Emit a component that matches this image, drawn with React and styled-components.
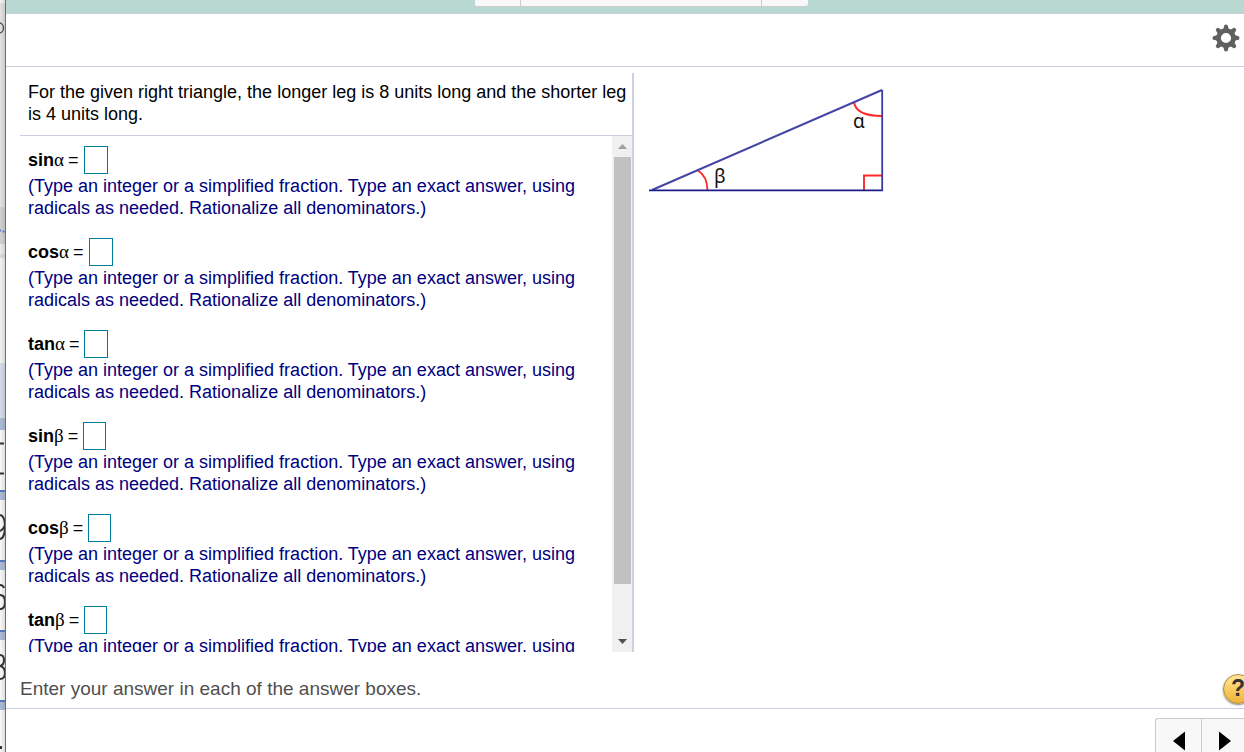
import React from 'react';
import styled, { createGlobalStyle } from 'styled-components';

const GlobalStyle = createGlobalStyle`
	* {
		box-sizing: border-box;
	}

	body {
		margin: 0;
		background: #fff;
		color: #000;
		font-family: 'Liberation Sans', Arial, sans-serif;
		font-size: 18px;
		line-height: 22px;
	}

	button {
		margin: 0;
		padding: 0;
		border: 0;
		background: none;
	}
`;

const Page = styled.div`
	display: flex;
	height: 100vh;
	overflow: hidden;
`;

const Backdrop = styled.div`
	flex: none;
	display: flex;
	flex-direction: column;
	width: 6px;
	overflow: hidden;
	border-right: 1px solid #6e6e6e;
`;

const Cell = styled.div`
	flex: none;
	display: flex;
	align-items: ${({ $align }) => $align || 'center'};
	height: ${({ $height }) => $height}px;
	overflow: hidden;
	background: linear-gradient(to right, transparent, rgba(0, 0, 0, 0.1)), ${({ $color }) => $color};
	border-top: ${({ $line }) => ($line ? `2px solid ${$line}` : '0')};
`;

const Dialog = styled.main`
	flex: 1;
	min-width: 0;
	display: flex;
	flex-direction: column;
	overflow: hidden;
`;

const TopBar = styled.div`
	flex: none;
	display: flex;
	justify-content: center;
	align-items: flex-start;
	height: 14px;
	background: #b9d8d1;
	border-bottom: 1px solid #c9cede;
`;

const TabStrip = styled.div`
	display: grid;
	grid-template-columns: 46px 241px 46px;
	height: 7px;
	margin-right: -32px;
	background: #f8f8f8;
	border-bottom: 1px solid #ccc;
	border-radius: 0 0 3px 3px;
`;

const Tab = styled.div`
	border-right: ${({ $last }) => ($last ? '0' : '1px solid #ccc')};
`;

const Header = styled.header`
	flex: none;
	display: flex;
	align-items: center;
	justify-content: flex-end;
	height: 53px;
	padding: 0 4px 4px;
	border-bottom: 1px solid #c9cede;
`;

const GearButton = styled.button`
	width: 28px;
	height: 28px;

	svg {
		display: block;
	}
`;

const Content = styled.div`
	flex: 1;
	min-height: 0;
	display: flex;
	padding: 6px 0 0 14px;
`;

const QuestionPane = styled.section`
	flex: 0 1 614px;
	display: flex;
	flex-direction: column;
	border-right: 2px solid #ccd0e0;
`;

const Prompt = styled.p`
	margin: 0;
	padding: 8px 2px 10px 8px;
	border-bottom: 1px solid #c9cede;
`;

const ScrollArea = styled.div`
	flex: 1;
	min-height: 0;
	display: flex;
`;

const QuestionList = styled.div`
	flex: 1;
	min-width: 0;
	display: flex;
	flex-direction: column;
	gap: 19px;
	padding: 10px 8px 0;
	overflow: hidden;
`;

const Question = styled.div`
	flex: none;
`;

const AnswerLabel = styled.label`
	display: flex;
	align-items: center;
	height: 29px;
	padding-bottom: 1px;
`;

const Fn = styled.b`
	font-weight: 700;
`;

const Greek = styled.span`
	font-family: 'Liberation Serif', 'Times New Roman', serif;
	font-size: 19px;
`;

const Equals = styled.span`
	margin: 0 5px 0 4px;
`;

const AnswerInput = styled.input`
	width: ${({ $narrow }) => ($narrow ? 23 : 24)}px;
	height: 28px;
	padding: 0 3px;
	border: 1px solid #007c9c;
	border-radius: 0;
	outline: none;
	background: #fff;
	font: inherit;
`;

const Hint = styled.p`
	margin: 0;
	color: #000080;
`;

const Scrollbar = styled.div`
	flex: none;
	display: flex;
	flex-direction: column;
	align-items: center;
	width: 20px;
	background: #f0f0f0;
`;

const ScrollArrow = styled.button`
	flex: none;
	width: 20px;
	height: 21px;

	svg {
		display: block;
		margin: 0 auto;
	}
`;

const Track = styled.div`
	flex: 1;
	width: 100%;
	padding: 0 1px 0 2px;
`;

const Thumb = styled.div`
	height: 90%;
	background: #c1c1c1;
`;

const FigurePane = styled.section`
	flex: 1;
	padding: 12px 14px;
`;

const HelpRow = styled.div`
	flex: none;
	display: flex;
	align-items: center;
	justify-content: space-between;
	height: 57px;
	padding: 17px 0 0 14px;
	border-bottom: 1px solid #c9cede;
	color: #505050;
	font-size: 19px;
`;

const HelpButton = styled.button`
	flex: none;
	width: 30px;
	height: 30px;
	margin-right: -9px;
	border: 1px solid #b0893a;
	border-radius: 50%;
	background: linear-gradient(#ffe79a, #f9cd62 50%, #f0b23c);
	box-shadow: 0 1px 2px rgba(0, 0, 0, 0.5);
	color: #333;
	font: bold 23px 'Liberation Sans', Arial, sans-serif;
`;

const Footer = styled.footer`
	flex: none;
	display: flex;
	justify-content: flex-end;
	height: 43px;
	padding-top: 9px;
`;

const Pager = styled.nav`
	display: flex;
	background: #f8f8f8;
	border: solid #ccc;
	border-width: 1px 0 0 1px;
	border-top-left-radius: 3px;
`;

const PagerButton = styled.button`
	width: ${({ $first }) => ($first ? 46 : 42)}px;
	padding: 10px 0 0 ${({ $first }) => ($first ? 0 : 4)}px;
	border-right: ${({ $first }) => ($first ? '1px solid #ccc' : '0')};

	svg {
		display: block;
		margin: 0 auto;
	}
`;

const questions = [
	{ fn: 'sin', angle: 'α' },
	{ fn: 'cos', angle: 'α' },
	{ fn: 'tan', angle: 'α' },
	{ fn: 'sin', angle: 'β' },
	{ fn: 'cos', angle: 'β' },
	{ fn: 'tan', angle: 'β' },
];

const App = () => {
	return (
		<Page>
			<GlobalStyle />
			<PageBehind />
			<Dialog>
				<TopBar>
					<TabStrip>
						<Tab />
						<Tab />
						<Tab $last />
					</TabStrip>
				</TopBar>
				<Header>
					<GearButton aria-label='Settings'>
						<GearIcon />
					</GearButton>
				</Header>
				<Content>
					<QuestionPane>
						<Prompt>
							For the given right triangle, the longer leg is 8 units long and the shorter leg is 4 units long.
						</Prompt>
						<ScrollArea>
							<QuestionList>
								{questions.map((q) => (
									<AnswerRow key={q.fn + q.angle} {...q} />
								))}
							</QuestionList>
							<Scrollbar>
								<ScrollArrow aria-label='Scroll up'>
									<svg width='9' height='5' viewBox='0 0 9 5'>
										<path d='M4.5 0 L9 5 H0 Z' fill='#a0a0a0' />
									</svg>
								</ScrollArrow>
								<Track>
									<Thumb />
								</Track>
								<ScrollArrow aria-label='Scroll down'>
									<svg width='9' height='5' viewBox='0 0 9 5'>
										<path d='M0 0 H9 L4.5 5 Z' fill='#505050' />
									</svg>
								</ScrollArrow>
							</Scrollbar>
						</ScrollArea>
					</QuestionPane>
					<FigurePane>
						<Triangle />
					</FigurePane>
				</Content>
				<HelpRow>
					<span>Enter your answer in each of the answer boxes.</span>
					<HelpButton aria-label='Help'>?</HelpButton>
				</HelpRow>
				<Footer>
					<Pager>
						<PagerButton $first aria-label='Previous'>
							<svg width='12' height='20' viewBox='0 0 12 20'>
								<path d='M12 0.5 V19.5 L0 10 Z' />
							</svg>
						</PagerButton>
						<PagerButton aria-label='Next'>
							<svg width='12' height='20' viewBox='0 0 12 20'>
								<path d='M0 0.5 V19.5 L12 10 Z' />
							</svg>
						</PagerButton>
					</Pager>
				</Footer>
			</Dialog>
		</Page>
	);
};

export default App;

const AnswerRow = ({ fn, angle }) => {
	return (
		<Question>
			<AnswerLabel>
				<Fn>{fn}</Fn>
				<Greek>{angle}</Greek>
				<Equals>=</Equals>
				<AnswerInput type='text' $narrow={angle === 'β'} />
			</AnswerLabel>
			<Hint>
				(Type an integer or a simplified fraction. Type an exact answer, using radicals as needed. Rationalize all
				denominators.)
			</Hint>
		</Question>
	);
};

const PageBehind = () => {
	return (
		<Backdrop aria-hidden='true'>
			<Cell $height={3} $color='#f4f4f4' />
			<Cell $height={204} $color='#e2e2e2' $align='flex-start'>
				<svg width='5' height='36' viewBox='0 0 5 36'>
					<ellipse cx='-1' cy='25' rx='4.5' ry='5' fill='none' stroke='#555' strokeWidth='1.5' />
				</svg>
			</Cell>
			<Cell $height={37} $color='#d2d2d2'>
				<svg width='5' height='37' viewBox='0 0 5 37'>
					<path d='M0 23.5 H1 M2.5 24.5 H4.5' stroke='#5577b8' strokeWidth='2' />
				</svg>
			</Cell>
			<Cell $height={10} $color='#eaeaea' />
			<Cell $height={4} $color='#dcdcdc' />
			<Cell $height={105} $color='#f2f2f2' />
			<Cell $height={55} $color='#d6dce9' />
			<Cell $height={12} $color='#aebcd7' />
			<Cell $height={60} $color='#f8f8f8'>
				<svg width='5' height='60' viewBox='0 0 5 60'>
					<path d='M0 13.5 H4 M0 43.5 H4' stroke='#333' strokeWidth='2' />
				</svg>
			</Cell>
			<Cell $height={10} $color='#aebcd7' $line='#5577b8' />
			<Cell $height={60} $color='#f8f8f8'>
				<svg width='5' height='60' viewBox='0 0 5 60'>
					<path d='M0 15 Q5 16 5 26 Q5 38 0 39 M0 31 Q3 30 5 25' fill='none' stroke='#333' strokeWidth='2' />
				</svg>
			</Cell>
			<Cell $height={10} $color='#aebcd7' $line='#5577b8' />
			<Cell $height={60} $color='#f8f8f8'>
				<svg width='5' height='60' viewBox='0 0 5 60'>
					<path d='M0 15 Q3 15 4 18 M0 25 Q5 25 5 32 Q5 39 0 39' fill='none' stroke='#333' strokeWidth='2' />
				</svg>
			</Cell>
			<Cell $height={10} $color='#aebcd7' $line='#5577b8' />
			<Cell $height={60} $color='#f8f8f8'>
				<svg width='5' height='60' viewBox='0 0 5 60'>
					<path d='M0 15 Q4 15 4 20 Q4 25 0 26 Q5 27 5 33 Q5 39 0 39' fill='none' stroke='#333' strokeWidth='2' />
				</svg>
			</Cell>
			<Cell $height={10} $color='#aebcd7' $line='#5577b8' />
			<Cell $height={60} $color='#f8f8f8'>
				<svg width='5' height='60' viewBox='0 0 5 60'>
					<rect x='0' y='36' width='2' height='3' fill='#333' />
				</svg>
			</Cell>
		</Backdrop>
	);
};

const GearIcon = () => {
	return (
		<svg width='28' height='28' viewBox='-14 -14 28 28'>
			<g fill='#606060'>
				{[0, 45, 90, 135, 180, 225, 270, 315].map((angle) => (
					<path
						key={angle}
						d='M-3.4 -8.5 Q-2 -10 -2 -11.8 Q-2 -13.5 0 -13.5 Q2 -13.5 2 -11.8 Q2 -10 3.4 -8.5 Z'
						transform={`rotate(${angle})`}
					/>
				))}
			</g>
			<circle r='7.4' fill='none' stroke='#606060' strokeWidth='4.6' />
		</svg>
	);
};

const Triangle = () => {
	return (
		<svg width='240' height='110' viewBox='648 85 240 110' role='img' aria-label='Right triangle'>
			<g fill='none' stroke='#ff2a2a' strokeWidth='1.9'>
				<path d='M698 170.5 Q707 176 707.5 190' />
				<path d='M854 102 Q856 116 882 116' />
				<path d='M864 190 V175.5 H882' />
			</g>
			<path d='M652 190 L882 90' fill='none' stroke='#4444a4' strokeWidth='2' />
			<path d='M649 190.3 H883' stroke='#1c1c8c' strokeWidth='1.8' />
			<path d='M882.2 90 V191' stroke='#3c3ca0' strokeWidth='1.8' />
			<g fill='#111' fontFamily='Noto Sans, sans-serif' fontSize='19'>
				<text x='853' y='128'>α</text>
				<text x='714' y='183'>β</text>
			</g>
		</svg>
	);
};
